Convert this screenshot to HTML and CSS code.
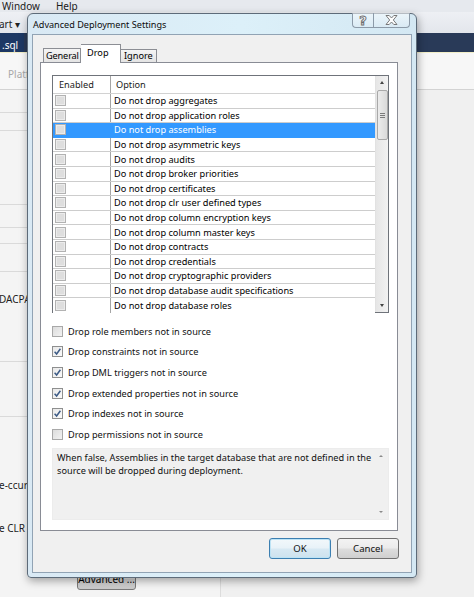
FILE: index.html
```html
<!DOCTYPE html>
<html>
<head>
<meta charset="utf-8">
<link rel="stylesheet" href="styles.css">
</head>
<body>
<div class="app">
  <div class="menubar"><span>Window</span><span>Help</span></div>
  <div class="toolbar"><span class="tb-item">art ▾</span></div>
  <div class="docbar"><span class="doctab">.sql</span></div>
  <div class="lp-head"><span class="platf">Platf</span></div>
  <div class="appbody">
    <div class="leftpanel">
      <div class="lrow h23"></div>
      <div class="lrow h18"></div>
      <div class="lrow h74"></div>
      <div class="lrow h23"></div>
      <div class="lrow h16"></div>
      <div class="lrow h28"></div>
      <div class="lrow h90"><span class="llabel l-dacpa">DACPA</span></div>
      <div class="lrow h55"></div>
      <div class="lrow last">
        <span class="llabel l-occur">e-ccur</span>
        <span class="llabel l-clr">e CLR</span>
        <span class="adv-btn">Advanced ...</span>
      </div>
    </div>
    <div class="rightpanel"></div>
  </div>
</div>

<div class="dialog">
  <div class="titlebar">
    <span class="title">Advanced Deployment Settings</span>
    <div class="capbtns">
      <span class="capbtn help"><span class="qmark">?</span></span>
      <span class="capbtn close">
        <svg width="13" height="10" viewBox="0 0 13 10"><polygon points="1,0.5 4.2,0.5 6.5,3 8.8,0.5 12,0.5 8.3,5 12,9.5 8.8,9.5 6.5,7 4.2,9.5 1,9.5 4.7,5" fill="#fdfdfd" stroke="#6c6c6c" stroke-width="0.9" stroke-linejoin="round"/></svg>
      </span>
    </div>
  </div>
  <div class="client">
    <div class="tabs">
      <span class="tab">General</span>
      <span class="tab active">Drop</span>
      <span class="tab">Ignore</span>
    </div>
    <div class="panel">
      <div class="grid">
        <div class="gridbody">
          <div class="ghead"><div class="c-en">Enabled</div><div class="c-opt">Option</div></div>
          <div class="row"><div class="c-en"><span class="cb"></span></div><div class="c-opt">Do not drop aggregates</div></div>
          <div class="row"><div class="c-en"><span class="cb"></span></div><div class="c-opt">Do not drop application roles</div></div>
          <div class="row sel"><div class="c-en"><span class="cb"></span></div><div class="c-opt">Do not drop assemblies</div></div>
          <div class="row"><div class="c-en"><span class="cb"></span></div><div class="c-opt">Do not drop asymmetric keys</div></div>
          <div class="row"><div class="c-en"><span class="cb"></span></div><div class="c-opt">Do not drop audits</div></div>
          <div class="row"><div class="c-en"><span class="cb"></span></div><div class="c-opt">Do not drop broker priorities</div></div>
          <div class="row"><div class="c-en"><span class="cb"></span></div><div class="c-opt">Do not drop certificates</div></div>
          <div class="row"><div class="c-en"><span class="cb"></span></div><div class="c-opt">Do not drop clr user defined types</div></div>
          <div class="row"><div class="c-en"><span class="cb"></span></div><div class="c-opt">Do not drop column encryption keys</div></div>
          <div class="row"><div class="c-en"><span class="cb"></span></div><div class="c-opt">Do not drop column master keys</div></div>
          <div class="row"><div class="c-en"><span class="cb"></span></div><div class="c-opt">Do not drop contracts</div></div>
          <div class="row"><div class="c-en"><span class="cb"></span></div><div class="c-opt">Do not drop credentials</div></div>
          <div class="row"><div class="c-en"><span class="cb"></span></div><div class="c-opt">Do not drop cryptographic providers</div></div>
          <div class="row"><div class="c-en"><span class="cb"></span></div><div class="c-opt">Do not drop database audit specifications</div></div>
          <div class="row"><div class="c-en"><span class="cb"></span></div><div class="c-opt">Do not drop database roles</div></div>
        </div>
        <div class="vscroll">
          <span class="arr up"></span>
          <span class="thumb"><span class="grip"></span></span>
          <span class="spacer"></span>
          <span class="arr down"></span>
        </div>
      </div>
      <div class="checks">
        <label class="chk"><span class="box"></span>Drop role members not in source</label>
        <label class="chk"><span class="box on"><svg width="9" height="9" viewBox="0 0 9 9"><polyline points="1.6,4.8 3.6,7 7.4,1.8" fill="none" stroke="#3d5b86" stroke-width="1.5"/></svg></span>Drop constraints not in source</label>
        <label class="chk"><span class="box on"><svg width="9" height="9" viewBox="0 0 9 9"><polyline points="1.6,4.8 3.6,7 7.4,1.8" fill="none" stroke="#3d5b86" stroke-width="1.5"/></svg></span>Drop DML triggers not in source</label>
        <label class="chk"><span class="box on"><svg width="9" height="9" viewBox="0 0 9 9"><polyline points="1.6,4.8 3.6,7 7.4,1.8" fill="none" stroke="#3d5b86" stroke-width="1.5"/></svg></span>Drop extended properties not in source</label>
        <label class="chk"><span class="box on"><svg width="9" height="9" viewBox="0 0 9 9"><polyline points="1.6,4.8 3.6,7 7.4,1.8" fill="none" stroke="#3d5b86" stroke-width="1.5"/></svg></span>Drop indexes not in source</label>
        <label class="chk"><span class="box"></span>Drop permissions not in source</label>
      </div>
      <div class="desc">
        <div class="desc-text">When false, Assemblies in the target database that are not defined in the<br>source will be dropped during deployment.</div>
        <div class="desc-scroll"><span class="sarr up"></span><span class="sarr down"></span></div>
      </div>
    </div>
    <div class="buttons">
      <span class="btn default">OK</span>
      <span class="btn">Cancel</span>
    </div>
  </div>
</div>
</body>
</html>
```

FILE: styles.css
```css
html, body {
  margin: 0;
  padding: 0;
}
body {
  font-family: "Noto Sans", "Open Sans", sans-serif;
  font-size: 9.2px;
  color: #000;
  width: 474px;
  height: 597px;
  overflow: hidden;
  position: relative;
  background: #f0f0f0;
}

/* ---------- background application ---------- */
.app {
  width: 474px;
  height: 597px;
  background: #f0f0f0;
  display: flex;
  flex-direction: column;
  overflow: hidden;
}
.menubar {
  height: 12px;
  flex: none;
  background: #e6e9ee;
  display: flex;
  align-items: flex-start;
  gap: 16px;
  padding-left: 2px;
  font-size: 10px;
  line-height: 12px;
  color: #1b1b1b;
}
.toolbar {
  height: 21px;
  flex: none;
  background: linear-gradient(#eef0f4, #e3e6ec);
  display: flex;
  align-items: center;
  font-size: 10px;
  color: #222;
}
.tb-item {
  margin-left: -1px;
  padding-top: 2px;
}
.docbar {
  height: 19px;
  flex: none;
  background: #293a58;
  border-bottom: 1px solid #f3efc8;
  display: flex;
  align-items: stretch;
}
.doctab {
  background: #1d3864;
  color: #fff;
  font-size: 10px;
  padding: 5px 6px 0 2px;
}
.lp-head {
  height: 37px;
  flex: none;
  box-sizing: border-box;
  background: #f7f7f7;
  border-bottom: 1px solid #d3d3d3;
  padding: 15px 0 0 8px;
}
.platf {
  color: #a8a8a8;
  font-size: 10px;
  line-height: 12px;
}
.appbody {
  flex: 1;
  display: flex;
}
.leftpanel {
  width: 220px;
  display: flex;
  flex-direction: column;
  background: #f4f4f4;
  border-right: 1px solid #dcdcdc;
}
.rightpanel {
  flex: 1;
  background: #f0f0f0;
}
.lrow {
  box-sizing: border-box;
  border-bottom: 1px solid #dadada;
  display: flex;
  flex-direction: column;
  align-items: flex-start;
}
.lrow.last {
  border-bottom: none;
  flex: 1;
}
.h16 { height: 16px; }
.h18 { height: 18px; }
.h23 { height: 23px; }
.h28 { height: 28px; }
.h55 { height: 55px; }
.h74 { height: 74px; }
.h90 { height: 90px; }
.llabel {
  font-size: 10px;
  line-height: 12px;
  color: #1e1e1e;
  margin-left: -1px;
}
.l-dacpa { margin-top: 21px; }
.l-occur { margin-top: 62px; }
.l-clr { margin-top: 31px; }
.adv-btn {
  margin-top: 35px;
  margin-left: 77px;
  width: 59px;
  height: 21px;
  box-sizing: border-box;
  border: 1px solid #7a7a7a;
  border-radius: 3px;
  background: linear-gradient(#f2f2f2, #e6e6e6 50%, #d6d6d6 50%, #cacaca);
  font-size: 10px;
  line-height: 19px;
  text-align: center;
}

/* ---------- dialog window ---------- */
.dialog {
  position: absolute;
  left: 27px;
  top: 13px;
  width: 390px;
  height: 565px;
  box-sizing: border-box;
  border: 1px solid #5d6b79;
  border-radius: 6px 6px 4px 4px;
  background: linear-gradient(90deg, #d9e9f4 0%, #dcf0f9 55%, #d4e8f3 100%);
  box-shadow: 1px 3px 9px rgba(0, 0, 0, 0.35);
  padding: 0 4px 4px 4px;
  display: flex;
  flex-direction: column;
}
.titlebar {
  height: 20px;
  flex: none;
  position: relative;
  display: flex;
  align-items: center;
}
.title {
  padding-left: 1px;
  font-size: 9.1px;
  color: #0c0c0c;
  padding-top: 1px;
}
.capbtns {
  position: absolute;
  top: -1px;
  right: 2px;
  display: flex;
}
.capbtn {
  height: 15px;
  box-sizing: border-box;
  border: 1px solid #8c9aa8;
  border-top: none;
  background: linear-gradient(rgba(255, 255, 255, 0.55), rgba(225, 236, 244, 0.4));
  display: flex;
  align-items: center;
  justify-content: center;
}
.capbtn.help {
  width: 21px;
  border-radius: 0 0 0 4px;
  border-right: none;
}
.capbtn.close {
  width: 37px;
  border-radius: 0 0 4px 0;
}
.qmark {
  font-family: "DejaVu Sans", sans-serif;
  font-weight: bold;
  font-size: 13px;
  line-height: 13px;
  color: #fafafa;
  -webkit-text-stroke: 0.9px #6c6c6c;
}

.client {
  flex: 1;
  background: #f0f0f0;
  border: 1px solid #91a3b4;
  display: flex;
  flex-direction: column;
  padding: 0 13px 0 7px;
}

/* tabs */
.tabs {
  margin-top: 9px;
  height: 18px;
  flex: none;
  display: flex;
  align-items: flex-end;
  padding-left: 3px;
  position: relative;
  z-index: 1;
}
.tab {
  box-sizing: border-box;
  height: 14px;
  border: 1px solid #8c8e94;
  border-bottom: none;
  background: linear-gradient(#f4f4f4, #e4e4e4);
  padding: 0 0 0 3px;
  line-height: 13px;
  white-space: nowrap;
}
.tab:first-child {
  width: 38px;
  padding-left: 2px;
  letter-spacing: -0.15px;
}
.tab:last-child {
  width: 36px;
  height: 13px;
  line-height: 12px;
  border-left: none;
}
.tab.active {
  width: 40px;
  height: 19px;
  margin-bottom: -1px;
  background: #fff;
  padding-left: 6px;
  line-height: 16px;
  border-left: none;
  position: relative;
}

.panel {
  height: 469px;
  flex: none;
  box-sizing: border-box;
  border: 1px solid #898c95;
  background: #fff;
  padding: 12px 0 0 11px;
  display: flex;
  flex-direction: column;
}

/* grid */
.grid {
  width: 337px;
  height: 238px;
  flex: none;
  box-sizing: border-box;
  border: 1px solid #6f737a;
  display: flex;
}
.gridbody {
  flex: 1;
  display: flex;
  flex-direction: column;
}
.ghead {
  height: 17px;
  flex: none;
  display: flex;
  border-bottom: 1px solid #d2d2d2;
  background: #fff;
  color: #222;
  line-height: 16px;
}
.ghead .c-en { padding-left: 6px; }
.ghead .c-opt { padding-left: 5px; }
.c-en {
  width: 58px;
  flex: none;
  box-sizing: border-box;
  border-right: 1px solid #a5a5a5;
  display: flex;
  align-items: center;
}
.c-opt {
  flex: 1;
  padding-left: 3px;
  display: flex;
  align-items: center;
  white-space: nowrap;
}
.row {
  height: 14.6px;
  flex: none;
  box-sizing: border-box;
  display: flex;
  border-bottom: 1px solid #cdcdcd;
  background: #fff;
}
.row .c-en {
  padding-left: 2px;
}
.row.sel {
  background: #3399ff;
  color: #fff;
  border-bottom-color: #3399ff;
}
.row.sel .c-en {
  border-right-color: #3399ff;
}
.cb {
  width: 11px;
  height: 11px;
  box-sizing: border-box;
  border: 1px solid #b2b2b2;
  background: #dedede;
  box-shadow: inset 0 0 0 1px #ececec;
}
.row:last-child {
  border-bottom: none;
}

.vscroll {
  width: 12px;
  flex: none;
  background: linear-gradient(90deg, #e6e6e6, #f2f2f2);
  border-left: 1px solid #e2e2e2;
  display: flex;
  flex-direction: column;
  align-items: center;
}
.arr {
  width: 0;
  height: 0;
  border-left: 2.5px solid transparent;
  border-right: 2.5px solid transparent;
}
.arr.up {
  margin-top: 5px;
  margin-bottom: 6px;
  border-bottom: 3px solid #444;
}
.arr.down {
  margin-bottom: 5px;
  border-top: 3px solid #444;
}
.thumb {
  width: 11px;
  height: 50px;
  box-sizing: border-box;
  border: 1px solid #a9a9a9;
  border-radius: 2px;
  background: linear-gradient(90deg, #ececec, #dadada);
  display: flex;
  align-items: center;
  justify-content: center;
}
.grip {
  width: 5px;
  height: 5px;
  background: repeating-linear-gradient(#7b7b7b 0 1px, transparent 1px 2px);
}
.spacer {
  flex: 1;
}

/* checkbox list */
.checks {
  margin-top: 8px;
  display: flex;
  flex-direction: column;
}
.chk {
  height: 20.6px;
  display: flex;
  align-items: center;
  gap: 5px;
  color: #111;
}
.box {
  width: 11px;
  height: 11px;
  flex: none;
  box-sizing: border-box;
  border: 1px solid #a8a8a8;
  background: linear-gradient(135deg, #dcdcdc, #f2f2f2);
  display: flex;
  align-items: center;
  justify-content: center;
}
.box.on {
  background: linear-gradient(135deg, #e8e8e8, #fbfbfb);
  border-color: #8e8f8f;
}

/* description */
.desc {
  margin-top: 3px;
  width: 337px;
  height: 72px;
  box-sizing: border-box;
  background: #f0f0f0;
  border: 1px solid #ececec;
  display: flex;
}
.desc-text {
  flex: 1;
  padding: 2px 0 0 4px;
  line-height: 13px;
  color: #111;
}
.desc-scroll {
  width: 14px;
  display: flex;
  flex-direction: column;
  justify-content: space-between;
  align-items: center;
  padding: 6px 0 6px 0;
}
.sarr {
  width: 0;
  height: 0;
  border-left: 2px solid transparent;
  border-right: 2px solid transparent;
}
.sarr.up { border-bottom: 2px solid #8a8a8a; }
.sarr.down { border-top: 2px solid #8a8a8a; }

/* buttons */
.buttons {
  margin-top: 7px;
  display: flex;
  justify-content: flex-end;
  gap: 6px;
  margin-right: -1px;
}
.btn {
  width: 62px;
  height: 21px;
  box-sizing: border-box;
  border: 1px solid #707070;
  border-radius: 3px;
  background: linear-gradient(#f3f3f3, #ebebeb 48%, #dddddd 52%, #cfcfcf);
  text-align: center;
  line-height: 19px;
  font-size: 9.6px;
  color: #111;
}
.btn.default {
  border-color: #3c7fb1;
  box-shadow: inset 0 0 0 1px #bde3f5;
  background: linear-gradient(#f2f8fb, #e8f2f8 48%, #d8e9f3 52%, #cde2ee);
}
```
